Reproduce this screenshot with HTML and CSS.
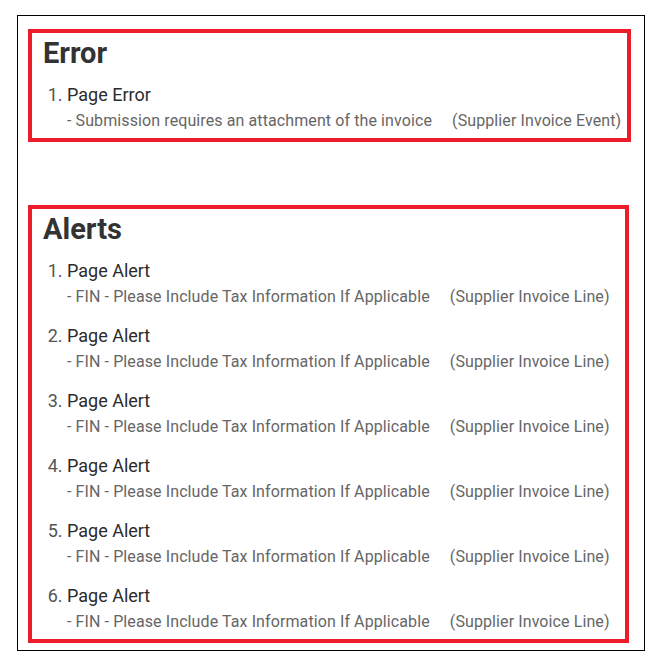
FILE: index.html
```html
<!DOCTYPE html>
<html lang="en">
<head>
  <meta charset="UTF-8" />
  <meta name="viewport" content="width=device-width, initial-scale=1.0"/>
  <title>Validation Messages</title>
  <link rel="stylesheet" href="styles.css">
</head>
<body>
  <div class="frame">
    <div class="msg-box">
      <h2>Error</h2>
      <ol class="msg-list">
        <li>
          <div class="msg-title">Page Error</div>
          <div class="msg-desc">- Submission requires an attachment of the invoice <span class="msg-src">(Supplier Invoice Event)</span></div>
        </li>
      </ol>
    </div>

    <div class="msg-box alerts">
      <h2>Alerts</h2>
      <ol class="msg-list">
        <li>
          <div class="msg-title">Page Alert</div>
          <div class="msg-desc">- FIN - Please Include Tax Information If Applicable <span class="msg-src">(Supplier Invoice Line)</span></div>
        </li>
        <li>
          <div class="msg-title">Page Alert</div>
          <div class="msg-desc">- FIN - Please Include Tax Information If Applicable <span class="msg-src">(Supplier Invoice Line)</span></div>
        </li>
        <li>
          <div class="msg-title">Page Alert</div>
          <div class="msg-desc">- FIN - Please Include Tax Information If Applicable <span class="msg-src">(Supplier Invoice Line)</span></div>
        </li>
        <li>
          <div class="msg-title">Page Alert</div>
          <div class="msg-desc">- FIN - Please Include Tax Information If Applicable <span class="msg-src">(Supplier Invoice Line)</span></div>
        </li>
        <li>
          <div class="msg-title">Page Alert</div>
          <div class="msg-desc">- FIN - Please Include Tax Information If Applicable <span class="msg-src">(Supplier Invoice Line)</span></div>
        </li>
        <li>
          <div class="msg-title">Page Alert</div>
          <div class="msg-desc">- FIN - Please Include Tax Information If Applicable <span class="msg-src">(Supplier Invoice Line)</span></div>
        </li>
      </ol>
    </div>
  </div>
</body>
</html>
```

FILE: styles.css
```css
body {
  margin: 0;
  background: #fff;
  font-family: Roboto, "Liberation Sans", Arial, sans-serif;
}
.frame {
  width: 603px;
  margin: 15px 0 0 17px;
  border: 1px solid #000;
  padding: 13px 13px 7px 10px;
}
.msg-box {
  border: 4px solid #ec1c2a;
  padding: 3px 4px 7px 11px;
}
.msg-box.alerts {
  margin-top: 63px;
  margin-right: 2px;
}
h2 {
  margin: 0 0 14px;
  font-size: 29px;
  line-height: 34px;
  font-weight: 700;
  color: #333;
}
.msg-list {
  margin: 0;
  padding-left: 24px;
}
.msg-list li {
  margin-bottom: 18px;
}
.msg-list li:last-child {
  margin-bottom: 0;
}
.msg-list li::marker {
  color: #555;
  font-size: 18px;
}
.msg-title {
  font-size: 18px;
  line-height: 22px;
  color: #2b2b2b;
}
.msg-desc {
  margin-top: 5px;
  font-size: 16px;
  line-height: 20px;
  letter-spacing: 0.1px;
  white-space: nowrap;
  color: #666;
}
.msg-src {
  margin-left: 16px;
}
```
